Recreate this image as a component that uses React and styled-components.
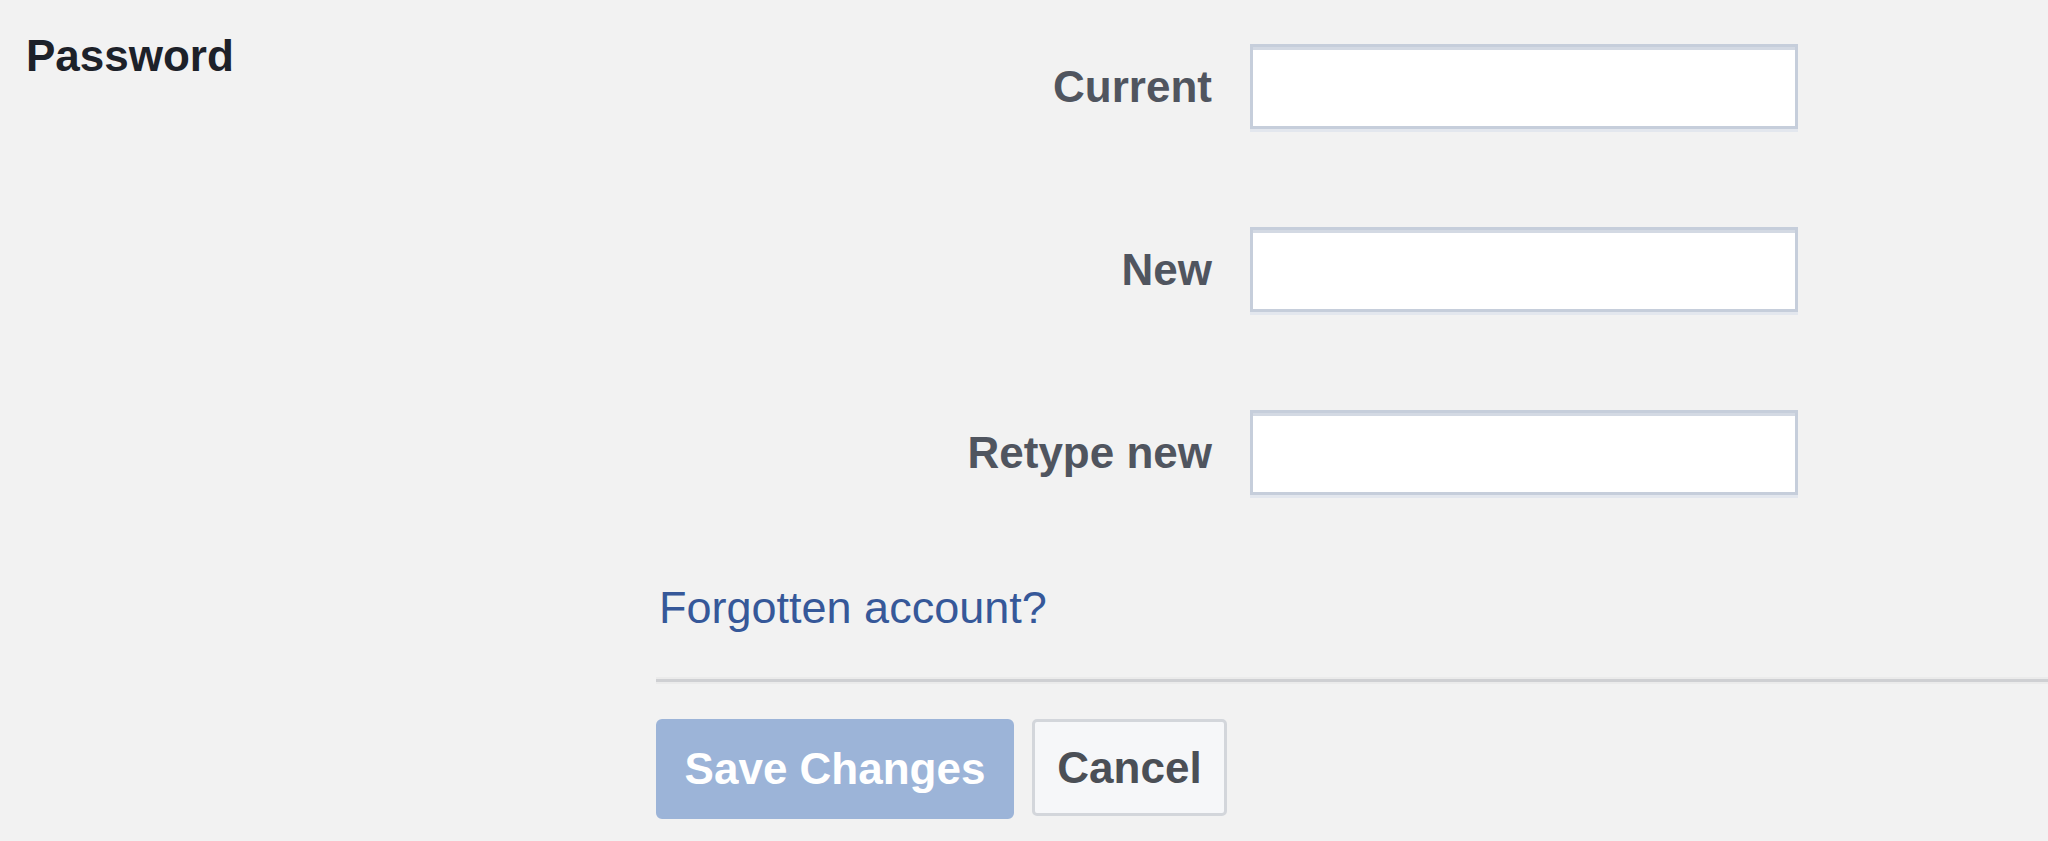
import React from "react";
import styled, { createGlobalStyle } from "styled-components";

const Global = createGlobalStyle`
  html, body {
    margin: 0;
    padding: 0;
    background: #f2f2f2;
  }
  body {
    font-family: "Liberation Sans", Arial, sans-serif;
  }
`;

const Page = styled.div`
  display: flex;
  align-items: flex-start;
  min-height: 841px;
  box-sizing: border-box;
  padding: 30px 0 0 26px;
  background: #f2f2f2;
`;

const SectionTitle = styled.div`
  width: 630px;
  flex: none;
  font-size: 44px;
  line-height: 52px;
  font-weight: 700;
  color: #1d2129;
`;

const Form = styled.form`
  flex: 1;
  display: flex;
  flex-direction: column;
  padding-top: 14px;
`;

const Fields = styled.div`
  display: flex;
  flex-direction: column;
  gap: 98px;
`;

const FieldRow = styled.label`
  display: grid;
  grid-template-columns: 556px 548px;
  column-gap: 38px;
  align-items: center;
`;

const FieldLabel = styled.span`
  text-align: right;
  font-size: 44px;
  line-height: 52px;
  font-weight: 700;
  color: #50555f;
`;

const TextInput = styled.input`
  box-sizing: border-box;
  width: 548px;
  height: 85px;
  margin: 0;
  padding: 0 12px;
  background: #ffffff;
  border: 3px solid #c6cedb;
  border-radius: 0;
  box-shadow: inset 0 3px 0 #d3d9e3, 0 3px 0 #e3e7ee;
  font-size: 40px;
  font-family: inherit;
  outline: none;
`;

const ForgotLink = styled.a`
  align-self: flex-start;
  margin-top: 87px;
  margin-left: 3px;
  font-size: 45px;
  line-height: 52px;
  color: #365899;
  text-decoration: none;
  cursor: pointer;
`;

const Divider = styled.div`
  margin-top: 45px;
  height: 3px;
  background: #cfd0d3;
  box-shadow: 0 -2px 0 #ebebeb, 0 2px 0 #ebebeb;
`;

const Actions = styled.div`
  display: flex;
  align-items: flex-start;
  gap: 18px;
  margin-top: 37px;
`;

const Button = styled.button`
  box-sizing: border-box;
  width: ${(p) => (p.$primary ? "358px" : "195px")};
  height: ${(p) => (p.$primary ? "100px" : "97px")};
  padding: 0;
  font-family: "Liberation Sans", Arial, sans-serif;
  font-size: 44px;
  font-weight: 700;
  border-radius: ${(p) => (p.$primary ? "6px" : "5px")};
  border: 3px solid ${(p) => (p.$primary ? "#9cb4d8" : "#d3d6db")};
  background: ${(p) => (p.$primary ? "#9cb4d8" : "#f6f7f9")};
  color: ${(p) => (p.$primary ? "#ffffff" : "#4b4f56")};
  cursor: pointer;
`;

const fields = ["Current", "New", "Retype new"];

export default function App() {
  return (
    <>
      <Global />
      <Page>
        <SectionTitle>Password</SectionTitle>
        <Form onSubmit={(e) => e.preventDefault()}>
          <Fields>
            {fields.map((f) => (
              <FieldRow key={f}>
                <FieldLabel>{f}</FieldLabel>
                <TextInput type="password" />
              </FieldRow>
            ))}
          </Fields>
          <ForgotLink>Forgotten account?</ForgotLink>
          <Divider />
          <Actions>
            <Button type="submit" $primary>Save Changes</Button>
            <Button type="button">Cancel</Button>
          </Actions>
        </Form>
      </Page>
    </>
  );
}
